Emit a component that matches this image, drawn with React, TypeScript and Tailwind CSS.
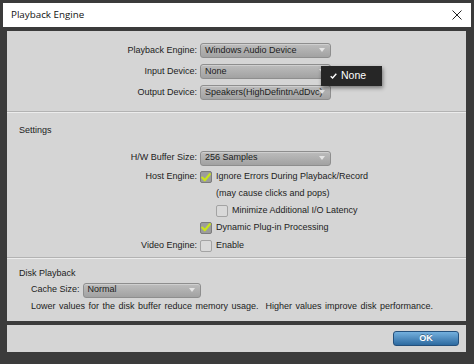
import React from 'react';

const label = "font-['Liberation_Sans',Arial,sans-serif] text-[9px] text-[#1c1c1c]";

function Select({ value, width }: { value: string; width: string }) {
  return (
    <div
      className={`relative h-[15px] ${width} rounded-[3px] border border-[#8e8e8e] bg-gradient-to-b from-[#bdbdbd] to-[#a2a2a2] pl-[4px] flex items-center overflow-hidden shadow-[inset_0_1px_0_#cfcfcf]`}
    >
      <span className={`${label} whitespace-nowrap text-[#1a1a1a]`}>{value}</span>
      <svg className="absolute right-[5px] top-[4px]" width="6" height="4" viewBox="0 0 6 4">
        <path d="M0 0 H6 L3 4 Z" fill="#e4e4e4" />
      </svg>
    </div>
  );
}

function Check({ checked }: { checked?: boolean }) {
  if (checked) {
    return (
      <div className="w-[12px] h-[12px] rounded-[2px] bg-[#9c9c9c] border border-[#7c7c7c] flex items-center justify-center shrink-0">
        <svg width="10" height="9" viewBox="0 0 10 9">
          <path d="M1.2 4.6 L3.8 7.3 L8.8 1.2" stroke="#c8e31c" strokeWidth="2.2" fill="none" strokeLinecap="round" strokeLinejoin="round" />
        </svg>
      </div>
    );
  }
  return <div className="w-[12px] h-[12px] rounded-[2px] bg-[#d9d9d9] border border-[#a3a3a3] shrink-0" />;
}

function Row({ name, h, children }: { name?: string; h: string; children: React.ReactNode }) {
  return (
    <div className={`flex items-center ${h}`}>
      <div className={`${label} w-[193px] text-right pr-[3px] shrink-0`}>{name}</div>
      {children}
    </div>
  );
}

function Divider() {
  return <div className="h-[2px] border-t border-[#b3b3b3] border-b border-b-[#ececec]" />;
}

export default function App() {
  return (
    <div className="w-[474px] h-[364px] bg-[#3b3b3b] p-[3px] flex flex-col">
      {/* Title bar */}
      <div className="h-[24px] bg-white flex items-center justify-between pl-[8px] pr-[9px] shrink-0">
        <span className="font-['Open_Sans',sans-serif] text-[9.8px] text-[#111]">Playback Engine</span>
        <svg width="10" height="10" viewBox="0 0 10 10">
          <path d="M0.5 0.5 L9.5 9.5 M9.5 0.5 L0.5 9.5" stroke="#222" strokeWidth="1" />
        </svg>
      </div>

      <div className="flex-1 flex flex-col gap-[4px] pt-[4px] pl-[4px] pr-[5px] pb-[9px]">
        {/* Main panel */}
        <div className="relative flex-1 bg-[#d5d5d5] flex flex-col">
          {/* Devices */}
          <div className="pt-[9px] pb-[8px] flex flex-col">
            <Row name="Playback Engine:" h="h-[21px]">
              <Select value="Windows Audio Device" width="w-[131px]" />
            </Row>
            <Row name="Input Device:" h="h-[21px]">
              <Select value="None" width="w-[131px]" />
            </Row>
            <Row name="Output Device:" h="h-[21px]">
              <Select value="Speakers(HighDefintnAdDvc)" width="w-[131px]" />
            </Row>
          </div>
          <Divider />

          {/* Settings */}
          <div className="pt-[10px] flex flex-col">
            <div className={`${label} h-[16px] flex items-center pl-[12px]`}>Settings</div>
            <div className="h-[9px]" />
            <Row name="H/W Buffer Size:" h="h-[20px]">
              <Select value="256 Samples" width="w-[131px]" />
            </Row>
            <Row name="Host Engine:" h="h-[18px]">
              <div className="flex items-center gap-[4px]">
                <Check checked />
                <span className={label}>Ignore Errors During Playback/Record</span>
              </div>
            </Row>
            <Row h="h-[16px]">
              <span className={`${label} pl-[16px]`}>(may cause clicks and pops)</span>
            </Row>
            <Row h="h-[17px]">
              <div className="flex items-center gap-[4px] pl-[16px]">
                <Check />
                <span className={label}>Minimize Additional I/O Latency</span>
              </div>
            </Row>
            <Row h="h-[17px]">
              <div className="flex items-center gap-[4px]">
                <Check checked />
                <span className={label}>Dynamic Plug-in Processing</span>
              </div>
            </Row>
            <Row name="Video Engine:" h="h-[20px]">
              <div className="flex items-center gap-[4px]">
                <Check />
                <span className={label}>Enable</span>
              </div>
            </Row>
          </div>
          <div className="h-[1px]" />
          <Divider />

          {/* Disk Playback */}
          <div className="pt-[7px] pl-[12px] flex flex-col">
            <div className={`${label} h-[16px] flex items-center`}>Disk Playback</div>
            <div className="h-[16px] flex items-center pl-[12px] gap-[3px]">
              <span className={label}>Cache Size:</span>
              <Select value="Normal" width="w-[118px]" />
            </div>
            <div className={`${label} h-[18px] flex items-center pl-[12px] whitespace-nowrap [word-spacing:1px]`}>
              Lower values for the disk buffer reduce memory usage.&nbsp; Higher values improve disk performance.
            </div>
          </div>

          {/* Open menu */}
          <div className="absolute left-[314px] top-[35px] w-[61px] h-[20px] bg-[#262626] shadow-[1px_2px_4px_rgba(0,0,0,0.45)] flex items-center pl-[9px] gap-[4px]">
            <svg width="7" height="6" viewBox="0 0 7 6">
              <path d="M0.7 3.2 L2.6 5 L6.3 0.8" stroke="#fff" strokeWidth="1.4" fill="none" />
            </svg>
            <span className="font-['Liberation_Sans',Arial,sans-serif] text-[10.5px] text-white">None</span>
          </div>
        </div>

        {/* Button bar */}
        <div className="h-[27px] bg-[#d5d5d5] flex items-center justify-end pr-[7px] shrink-0">
          <button className="w-[66px] h-[15px] rounded-[3px] border border-[#24507c] bg-gradient-to-b from-[#74b0de] to-[#2d6aa0] flex items-center justify-center font-['Liberation_Sans',Arial,sans-serif] text-[9px] font-bold text-white [text-shadow:0_-1px_0_rgba(0,0,0,0.35)]">
            OK
          </button>
        </div>
      </div>
    </div>
  );
}
